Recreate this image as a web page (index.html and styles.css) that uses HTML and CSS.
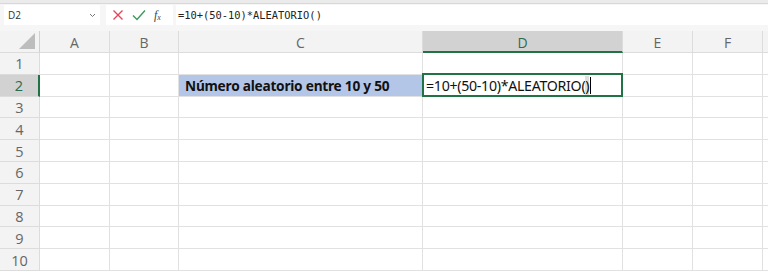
FILE: index.html
```html
<!DOCTYPE html>
<html lang="es">
<head>
<meta charset="utf-8">
<title>Excel</title>
<link rel="stylesheet" href="styles.css">
</head>
<body>
<div class="topstrip"></div>
<div class="fbar">
  <div class="namebox"><span>D2</span>
    <svg class="chev" width="7" height="5" viewBox="0 0 7 5"><path d="M1 1 L3.5 3.5 L6 1" fill="none" stroke="#777" stroke-width="1"/></svg>
  </div>
  <div class="icons">
    <svg width="12" height="12" viewBox="0 0 12 12"><path d="M1.5 1.5 L10.5 10.5 M10.5 1.5 L1.5 10.5" stroke="#e2475a" stroke-width="1.4" fill="none"/></svg>
    <svg width="14" height="12" viewBox="0 0 14 12"><path d="M1 6.5 L5 10.5 L13 1.5" stroke="#3a9a5b" stroke-width="1.4" fill="none"/></svg>
    <span class="fx">f<sub>x</sub></span>
  </div>
  <div class="formula">=10+(50-10)*ALEATORIO()</div>
</div>
<div class="sheet">
  <div class="hd corner"><span class="tri"></span></div>
  <div class="hd col">A</div>
  <div class="hd col">B</div>
  <div class="hd col">C</div>
  <div class="hd col sel">D</div>
  <div class="hd col">E</div>
  <div class="hd col">F</div>
  <div class="hd col last"></div>

  <div class="hd row">1</div><div class="c"></div><div class="c"></div><div class="c"></div><div class="c"></div><div class="c"></div><div class="c"></div><div class="c last"></div>
  <div class="hd row rsel">2</div><div class="c"></div><div class="c"></div><div class="c label">Número aleatorio entre 10 y 50</div><div class="c active"><span class="ftxt">=10+(50-10)*ALEATORIO(<span class="par">)</span></span><span class="caret"></span><span class="frame"></span></div><div class="c"></div><div class="c"></div><div class="c last"></div>
  <div class="hd row">3</div><div class="c"></div><div class="c"></div><div class="c"></div><div class="c"></div><div class="c"></div><div class="c"></div><div class="c last"></div>
  <div class="hd row">4</div><div class="c"></div><div class="c"></div><div class="c"></div><div class="c"></div><div class="c"></div><div class="c"></div><div class="c last"></div>
  <div class="hd row">5</div><div class="c"></div><div class="c"></div><div class="c"></div><div class="c"></div><div class="c"></div><div class="c"></div><div class="c last"></div>
  <div class="hd row">6</div><div class="c"></div><div class="c"></div><div class="c"></div><div class="c"></div><div class="c"></div><div class="c"></div><div class="c last"></div>
  <div class="hd row">7</div><div class="c"></div><div class="c"></div><div class="c"></div><div class="c"></div><div class="c"></div><div class="c"></div><div class="c last"></div>
  <div class="hd row">8</div><div class="c"></div><div class="c"></div><div class="c"></div><div class="c"></div><div class="c"></div><div class="c"></div><div class="c last"></div>
  <div class="hd row">9</div><div class="c"></div><div class="c"></div><div class="c"></div><div class="c"></div><div class="c"></div><div class="c"></div><div class="c last"></div>
  <div class="hd row">10</div><div class="c"></div><div class="c"></div><div class="c"></div><div class="c"></div><div class="c"></div><div class="c"></div><div class="c last"></div>
</div>
</body>
</html>
```
FILE: styles.css
```css
* { box-sizing: border-box; }
html, body { margin: 0; padding: 0; background: #fff; overflow: hidden; }
body { width: 768px; height: 276px; font-family: "Open Sans", "Noto Sans", sans-serif; }

.topstrip { height: 4px; background: #ebebeb; border-bottom: 1px solid #d8d8d8; }

.fbar {
  height: 27px;
  background: #f6f6f6;
  display: flex;
  align-items: flex-start;
  padding: 1px 0 0 4px;
}
.namebox {
  width: 96px; height: 20px; background: #fff;
  display: flex; align-items: center; justify-content: space-between;
  padding: 0 4px 0 4px;
  font-size: 10px; color: #333;
}
.namebox .chev { margin-top: 1px; }
.icons {
  margin-left: 6px; width: 67px; height: 20px; background: #fff;
  display: flex; align-items: center; gap: 8px; padding-left: 6px;
}
.fx { font-family: "Liberation Serif", serif; font-style: italic; font-size: 12px; color: #444; line-height: 1; }
.fx sub { font-size: 8px; vertical-align: -1px; }
.formula {
  margin-left: 3px; flex: 1; height: 20px; background: #fff;
  font-family: "DejaVu Sans Mono", monospace; font-size: 10.4px; color: #222;
  padding: 3px 0 0 2px; line-height: 14px;
}

.sheet {
  display: grid;
  grid-template-columns: 40px 70px 69px 244px 200px 70px 70px 5px;
  grid-template-rows: 22px repeat(10, 21.8px);
}
.hd {
  background: #f3f3f3;
  color: #666;
  font-size: 14px;
  display: flex; align-items: center; justify-content: center;
  border-right: 1px solid #dcdcdc;
  border-bottom: 1px solid #dcdcdc;
}
.col { padding-top: 2px; }
.corner { position: relative; border-right: 1px solid #d0d0d0; }
.tri {
  position: absolute; right: 4px; bottom: 3px;
  width: 0; height: 0;
  border-left: 16px solid transparent;
  border-bottom: 16px solid #bdbdbd;
}
.hd.sel { background: #d2d2d2; color: #2f6b48; border-bottom: 2px solid #217346; }
.hd.row { font-size: 14.5px; color: #666; padding-top: 1px; }
.hd.rsel { background: #d2d2d2; color: #2f6b48; border-right: 2px solid #217346; }
.hd.last { border-right: none; }

.c { border-right: 1px solid #e1e1e1; border-bottom: 1px solid #e1e1e1; background: #fff; }
.c.last { border-right: none; }
.c.label {
  background: #b4c6e7;
  font-family: "Noto Sans", "Open Sans", sans-serif;
  font-weight: bold; font-size: 13.7px; color: #111;
  display: flex; align-items: center; padding-left: 6px; letter-spacing: -0.25px;
}
.c.active {
  position: relative;
  font-family: "Noto Sans", "Open Sans", sans-serif;
  font-size: 14.2px; color: #111;
  display: flex; align-items: center; padding-left: 3px; letter-spacing: -0.3px;
}
.par { background: #e0e0e0; }
.caret { display: inline-block; width: 1px; height: 17px; background: #000; margin-left: 1px; }
.frame {
  position: absolute; left: -1px; top: -2px; right: -1px; bottom: -1px;
  border: 2px solid #217346;
}
```
